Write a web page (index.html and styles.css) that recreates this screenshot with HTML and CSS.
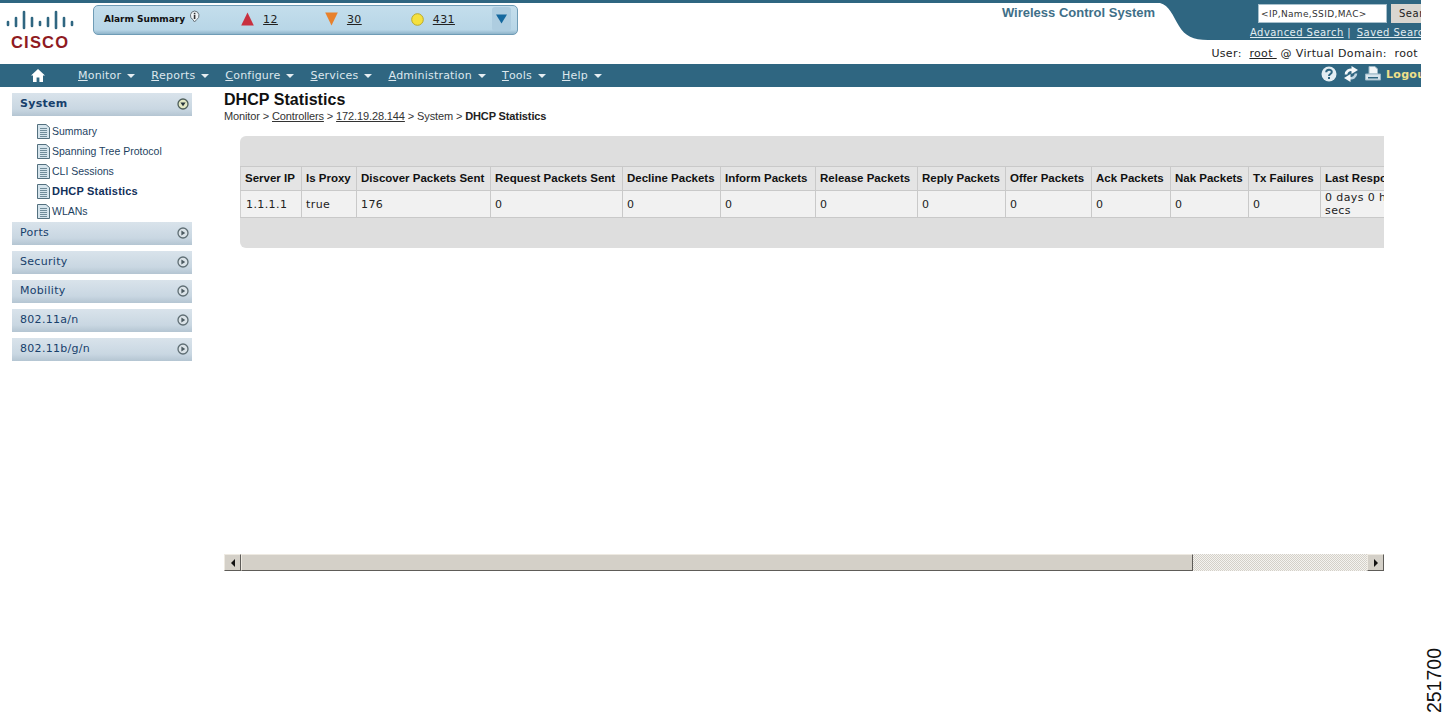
FILE: index.html
```html
<!DOCTYPE html>
<html lang="en">
<head>
  <meta charset="UTF-8" />
  <title>DHCP Statistics</title>
  <link rel="stylesheet" href="styles.css">
</head>
<body>

  <div class="frame">
    <div class="topline"></div>

    <div class="header">
      <div class="logo">
        <svg class="logo-bars" width="69" height="20" viewBox="0 0 69 20">
          <g stroke="#2f6681" stroke-width="2.6" stroke-linecap="round">
            <line x1="3" y1="12" x2="3" y2="15"/>
            <line x1="11" y1="8" x2="11" y2="16"/>
            <line x1="19" y1="2" x2="19" y2="18"/>
            <line x1="27" y1="8" x2="27" y2="16"/>
            <line x1="35" y1="12" x2="35" y2="15"/>
            <line x1="43" y1="8" x2="43" y2="16"/>
            <line x1="51" y1="2" x2="51" y2="18"/>
            <line x1="59" y1="8" x2="59" y2="16"/>
            <line x1="67" y1="12" x2="67" y2="15"/>
          </g>
        </svg>
        <div class="logo-text">CISCO</div>
      </div>

      <div class="alarm">
        <span class="alarm-title">Alarm Summary</span>
        <svg class="alarm-info" width="13" height="13" viewBox="0 0 13 13">
          <path d="M6.5 1a4.6 4.6 0 0 1 2 8.7L6.5 12 5 9.7A4.6 4.6 0 0 1 6.5 1z" fill="#eef3f6" stroke="#68747c"/>
          <rect x="5.8" y="5" width="1.6" height="4" fill="#333"/>
          <rect x="5.8" y="2.8" width="1.6" height="1.5" fill="#333"/>
        </svg>
        <span class="alarm-item alarm-crit">
          <svg width="13" height="14" viewBox="0 0 13 14"><path d="M6.5 0.5 12.8 13.5H0.2z" fill="#c8303f"/></svg>
          <a href="#">12</a>
        </span>
        <span class="alarm-item alarm-major">
          <svg width="13" height="14" viewBox="0 0 13 14"><path d="M0.2 0.5H12.8L6.5 13.5z" fill="#e8812c"/></svg>
          <a href="#">30</a>
        </span>
        <span class="alarm-item alarm-minor">
          <svg width="13" height="13" viewBox="0 0 13 13"><circle cx="6.5" cy="6.5" r="5.8" fill="#f5e13e" stroke="#b9a92b"/></svg>
          <a href="#">431</a>
        </span>
        <span class="alarm-toggle">
          <svg width="11" height="10" viewBox="0 0 11 10"><path d="M0 0.5H11L5.5 9.5z" fill="#14689e"/></svg>
        </span>
      </div>

      <div class="head-right">
        <div class="brand-row">
          <div class="brand">Wireless Control System</div>
          <svg class="brand-curve" width="48" height="37" viewBox="0 0 48 37">
            <path d="M0 0C9 2 13 13 19 23 25 33 33 37 48 37V0z" fill="#2f6681"/>
          </svg>
          <div class="search-panel">
            <div class="search-row">
              <input class="search-input" type="text" value="&lt;IP,Name,SSID,MAC&gt;">
              <button class="search-btn">Search</button>
            </div>
            <div class="search-links"><a href="#">Advanced Search</a> | <a href="#">Saved Searches</a></div>
          </div>
        </div>
        <div class="user-line">User:&nbsp; <a href="#">root&nbsp;</a> @ Virtual Domain:&nbsp; root</div>
      </div>
    </div>

    <div class="nav">
      <svg class="nav-home" width="14" height="13" viewBox="0 0 14 13">
        <path d="M7 0 14 6.5H12V13H8.4V8.6H5.6V13H2V6.5H0z" fill="#fff"/>
      </svg>
      <a class="nav-item" href="#"><u>M</u>onitor</a>
      <a class="nav-item" href="#"><u>R</u>eports</a>
      <a class="nav-item" href="#"><u>C</u>onfigure</a>
      <a class="nav-item" href="#"><u>S</u>ervices</a>
      <a class="nav-item" href="#"><u>A</u>dministration</a>
      <a class="nav-item" href="#"><u>T</u>ools</a>
      <a class="nav-item" href="#"><u>H</u>elp</a>
      <div class="nav-tools">
        <svg width="16" height="16" viewBox="0 0 16 16">
          <circle cx="8" cy="8" r="7.5" fill="#e3edf2"/>
          <path d="M5.2 6.2C5.2 2.9 10.8 2.9 10.8 6 10.8 8 8 8 8 10" fill="none" stroke="#2f6681" stroke-width="2"/>
          <rect x="7" y="11" width="2" height="2" fill="#2f6681"/>
        </svg>
        <svg width="16" height="16" viewBox="0 0 16 16">
          <path d="M3 8.5A5 5 0 0 1 9.5 4" fill="none" stroke="#f4f8fa" stroke-width="2.6"/>
          <path d="M8.5 0 15 4 8.5 8z" fill="#f4f8fa"/>
          <path d="M13 7.5A5 5 0 0 1 6.5 12" fill="none" stroke="#bfd6e3" stroke-width="2.6"/>
          <path d="M7.5 16 1 12 7.5 8z" fill="#f4f8fa"/>
        </svg>
        <svg width="16" height="16" viewBox="0 0 16 16">
          <path d="M4 0.5H10L12.5 3V8H4z" fill="#f2f6f8" stroke="#9db8c7"/>
          <path d="M0.5 8H15.5V14H0.5z" fill="#d7e4ec" stroke="#9db8c7"/>
          <rect x="3" y="11" width="10" height="1.5" fill="#2f6681"/>
        </svg>
        <a class="logout" href="#">Logout</a>
      </div>
    </div>

    <div class="page">
      <div class="sidebar">
        <div class="side-head side-open">System
          <svg width="12" height="12" viewBox="0 0 12 12"><circle cx="6" cy="6" r="5" fill="#e3e8c4" stroke="#4f5f5a" stroke-width="1.3"/><path d="M3.4 4.6H8.6L6 8.2z" fill="#26343a"/></svg>
        </div>
        <ul class="side-list">
          <li><svg class="doc" width="13" height="15" viewBox="0 0 13 15"><path d="M0.5 0.5H9L12.5 3.5V14.5H0.5z" fill="#d5e4ec" stroke="#53707f"/><path d="M3 4.5H10M3 6.5H10M3 8.5H10M3 10.5H10M3 12.5H10" stroke="#6f8c9a"/></svg>Summary</li>
          <li><svg class="doc" width="13" height="15" viewBox="0 0 13 15"><path d="M0.5 0.5H9L12.5 3.5V14.5H0.5z" fill="#d5e4ec" stroke="#53707f"/><path d="M3 4.5H10M3 6.5H10M3 8.5H10M3 10.5H10M3 12.5H10" stroke="#6f8c9a"/></svg>Spanning Tree Protocol</li>
          <li><svg class="doc" width="13" height="15" viewBox="0 0 13 15"><path d="M0.5 0.5H9L12.5 3.5V14.5H0.5z" fill="#d5e4ec" stroke="#53707f"/><path d="M3 4.5H10M3 6.5H10M3 8.5H10M3 10.5H10M3 12.5H10" stroke="#6f8c9a"/></svg>CLI Sessions</li>
          <li class="current"><svg class="doc" width="13" height="15" viewBox="0 0 13 15"><path d="M0.5 0.5H9L12.5 3.5V14.5H0.5z" fill="#d5e4ec" stroke="#53707f"/><path d="M3 4.5H10M3 6.5H10M3 8.5H10M3 10.5H10M3 12.5H10" stroke="#6f8c9a"/></svg>DHCP Statistics</li>
          <li><svg class="doc" width="13" height="15" viewBox="0 0 13 15"><path d="M0.5 0.5H9L12.5 3.5V14.5H0.5z" fill="#d5e4ec" stroke="#53707f"/><path d="M3 4.5H10M3 6.5H10M3 8.5H10M3 10.5H10M3 12.5H10" stroke="#6f8c9a"/></svg>WLANs</li>
        </ul>
        <div class="side-head">Ports
          <svg width="12" height="12" viewBox="0 0 12 12"><circle cx="6" cy="6" r="5" fill="#dbe3e8" stroke="#5f6e74" stroke-width="1.3"/><path d="M4.4 3.4V8.6L8.2 6z" fill="#4c5a60"/></svg>
        </div>
        <div class="side-head">Security
          <svg width="12" height="12" viewBox="0 0 12 12"><circle cx="6" cy="6" r="5" fill="#dbe3e8" stroke="#5f6e74" stroke-width="1.3"/><path d="M4.4 3.4V8.6L8.2 6z" fill="#4c5a60"/></svg>
        </div>
        <div class="side-head">Mobility
          <svg width="12" height="12" viewBox="0 0 12 12"><circle cx="6" cy="6" r="5" fill="#dbe3e8" stroke="#5f6e74" stroke-width="1.3"/><path d="M4.4 3.4V8.6L8.2 6z" fill="#4c5a60"/></svg>
        </div>
        <div class="side-head">802.11a/n
          <svg width="12" height="12" viewBox="0 0 12 12"><circle cx="6" cy="6" r="5" fill="#dbe3e8" stroke="#5f6e74" stroke-width="1.3"/><path d="M4.4 3.4V8.6L8.2 6z" fill="#4c5a60"/></svg>
        </div>
        <div class="side-head">802.11b/g/n
          <svg width="12" height="12" viewBox="0 0 12 12"><circle cx="6" cy="6" r="5" fill="#dbe3e8" stroke="#5f6e74" stroke-width="1.3"/><path d="M4.4 3.4V8.6L8.2 6z" fill="#4c5a60"/></svg>
        </div>
      </div>

      <div class="content">
        <h1 class="title">DHCP Statistics</h1>
        <div class="crumbs">Monitor &gt; <a href="#">Controllers</a> &gt; <a href="#">172.19.28.144</a> &gt; System &gt; <b>DHCP Statistics</b></div>

        <div class="table-panel">
          <table class="stats">
            <tr>
              <th>Server IP</th><th>Is Proxy</th><th>Discover Packets Sent</th><th>Request Packets Sent</th>
              <th>Decline Packets</th><th>Inform Packets</th><th>Release Packets</th><th>Reply Packets</th>
              <th>Offer Packets</th><th>Ack Packets</th><th>Nak Packets</th><th>Tx Failures</th><th>Last Response</th>
            </tr>
            <tr>
              <td>1.1.1.1</td><td>true</td><td>176</td><td>0</td><td>0</td><td>0</td><td>0</td><td>0</td><td>0</td><td>0</td><td>0</td><td>0</td>
              <td>0 days 0 hours 0 mins 12 secs</td>
            </tr>
          </table>
        </div>

        <div class="hscroll">
          <div class="hscroll-btn"><span class="arrow-left"></span></div>
          <div class="hscroll-thumb"></div>
          <div class="hscroll-track"></div>
          <div class="hscroll-btn"><span class="arrow-right"></span></div>
        </div>
      </div>
    </div>
  </div>

  <div class="figure-no">251700</div>

</body>
</html>
```

FILE: styles.css
```css
html, body {
  height: 100%;
}

body {
  margin: 0;
  background: #fff;
  color: #222;
  font-family: "DejaVu Sans", sans-serif;
  font-size: 11px;
  overflow: hidden;
}

a {
  color: inherit;
}

.frame {
  width: 1421px;
  height: 715px;
  overflow: hidden;
}

.topline {
  height: 3px;
  background: #2f6681;
}

/* header */
.header {
  display: flex;
  height: 61px;
}

.logo {
  width: 69px;
  padding: 7px 19px 0 5px;
}

.logo-bars {
  display: block;
}

.logo-text {
  margin-top: 4px;
  padding-left: 6px;
  color: #8f1a22;
  font-family: "Liberation Sans", sans-serif;
  font-size: 16.5px;
  font-weight: bold;
  line-height: 16px;
  letter-spacing: 1.2px;
}

.alarm {
  display: flex;
  align-items: center;
  box-sizing: border-box;
  width: 425px;
  height: 30px;
  margin-top: 2px;
  padding: 0 4px 2px 10px;
  background: linear-gradient(#c4deec, #b8d6e7 85%, #8fb4ca);
  border: 1px solid #6f9cb6;
  border-radius: 5px;
}

.alarm-title {
  color: #111;
  font-size: 9px;
  font-weight: bold;
}

.alarm-info {
  margin: -5px 0 0 3px;
}

.alarm-item {
  display: flex;
  align-items: center;
  gap: 9px;
  letter-spacing: .4px;
}

.alarm-crit {
  margin-left: 40px;
}

.alarm-major {
  margin-left: 47px;
}

.alarm-minor {
  margin-left: 49px;
}

.alarm-toggle {
  display: flex;
  align-items: center;
  justify-content: center;
  width: 19px;
  height: 24px;
  margin-left: auto;
  margin-right: 2px;
  background: #aecde0;
  border-radius: 3px;
}

.head-right {
  flex: 1;
  display: flex;
  flex-direction: column;
}

.brand-row {
  display: flex;
  justify-content: flex-end;
  height: 37px;
}

.brand {
  margin: 2px 5px 0 0;
  color: #3f6f88;
  font-family: "Liberation Sans", sans-serif;
  font-size: 13px;
  font-weight: bold;
  line-height: 16px;
}

.brand-curve {
  display: block;
}

.search-panel {
  box-sizing: border-box;
  width: 213px;
  padding: 1px 0 0 42px;
  background: #2f6681;
  color: #e3edf2;
  white-space: nowrap;
  overflow: hidden;
}

.search-row {
  display: flex;
  gap: 4px;
  margin-left: 8px;
}

.search-input {
  box-sizing: border-box;
  flex: none;
  width: 129px;
  height: 19px;
  padding: 0 2px;
  border: 1px solid #a8c0cc;
  background: #fff;
  color: #333;
  font-family: "DejaVu Sans", sans-serif;
  font-size: 9px;
  letter-spacing: .35px;
}

.search-btn {
  flex: none;
  width: 50px;
  height: 19px;
  padding: 0 8px;
  border: none;
  background: #d9d6d0;
  color: #222;
  font-family: "DejaVu Sans", sans-serif;
  font-size: 10px;
  letter-spacing: .5px;
  text-align: left;
}

.search-links {
  margin-top: 3px;
  font-size: 10px;
  line-height: 13px;
  letter-spacing: .45px;
}

.search-links a + a {
  margin-left: 2px;
}

.user-line {
  margin-top: 7px;
  padding-right: 3px;
  text-align: right;
  line-height: 14px;
  letter-spacing: .35px;
}

/* nav bar */
.nav {
  display: flex;
  align-items: center;
  height: 23px;
  padding-left: 31px;
  background: #2f6681;
}

.nav-home {
  margin-right: 33px;
}

.nav-item {
  display: flex;
  align-items: center;
  margin-right: 16px;
  color: #dde8ee;
  text-decoration: none;
  white-space: nowrap;
  letter-spacing: .2px;
}

.nav-item::after {
  content: "";
  margin-left: 6px;
  border-top: 4px solid #e6eef2;
  border-left: 4px solid transparent;
  border-right: 4px solid transparent;
}

.nav-tools {
  display: flex;
  align-items: center;
  gap: 6px;
  box-sizing: border-box;
  width: 100px;
  margin-left: auto;
  overflow: hidden;
  margin-top: -3px;
}

.nav-tools svg {
  flex: none;
}

.logout {
  flex: none;
  margin-left: -1px;
  color: #efe08a;
  font-weight: bold;
  text-decoration: none;
  letter-spacing: .3px;
}

/* page body */
.page {
  display: flex;
}

.sidebar {
  flex: none;
  width: 180px;
  margin: 6px 32px 0 12px;
}

.side-head {
  display: flex;
  align-items: center;
  justify-content: space-between;
  box-sizing: border-box;
  height: 23px;
  margin-bottom: 6px;
  padding: 0 3px 3px 8px;
  background: linear-gradient(#d9e3eb, #c9d7e2 70%, #b4c5d2);
  color: #17406b;
  letter-spacing: .3px;
}

.side-head svg {
  margin-top: 1px;
}

.side-open {
  margin-bottom: 0;
  font-weight: bold;
}

.side-list {
  margin: 5px 0 1px;
  padding: 0 0 0 25px;
  list-style: none;
}

.side-list li {
  display: flex;
  align-items: center;
  gap: 2px;
  height: 20px;
  color: #1d3f5f;
  font-family: "Liberation Sans", sans-serif;
  font-size: 10.5px;
}

.side-list .current {
  color: #12305a;
  font-size: 11px;
  font-weight: bold;
  letter-spacing: .2px;
}

.doc {
  flex: none;
}

.content {
  flex: none;
  width: 1160px;
}

.title {
  margin: 4px 0 0;
  color: #111;
  font-family: "Liberation Sans", sans-serif;
  font-size: 16px;
  font-weight: bold;
  line-height: 17px;
  letter-spacing: .05px;
}

.crumbs {
  margin-top: 1px;
  color: #333;
  font-family: "Liberation Sans", sans-serif;
  font-size: 11px;
  line-height: 14px;
  letter-spacing: -.12px;
}

.crumbs b {
  color: #222;
}

.table-panel {
  box-sizing: border-box;
  width: 1144px;
  height: 112px;
  margin: 13px 0 0 16px;
  padding-top: 30px;
  background: #dedede;
  border-radius: 6px 0 0 6px;
  overflow: hidden;
}

.stats {
  table-layout: fixed;
  width: 1260px;
  border-collapse: collapse;
}

.stats th,
.stats td {
  box-sizing: border-box;
  padding: 0 4px;
  border: 1px solid #c9c9c9;
  border-left-color: #cfcfcf;
  text-align: left;
  vertical-align: middle;
}

.stats th {
  height: 24px;
  padding-bottom: 2px;
  background: #e4e4e4;
  color: #111;
  font-family: "Liberation Sans", sans-serif;
  font-size: 11.5px;
  font-weight: bold;
  white-space: nowrap;
}

.stats td {
  height: 27px;
  background: #f1f1f1;
  color: #222;
  line-height: 13px;
  letter-spacing: .4px;
}

.stats td:first-child {
  padding-left: 5px;
}

.stats td:last-child {
  padding-top: 1px;
  line-height: 12.5px;
}

.stats th:nth-child(1) { width: 61px; }
.stats th:nth-child(2) { width: 55px; }
.stats th:nth-child(3) { width: 134px; }
.stats th:nth-child(4) { width: 132px; }
.stats th:nth-child(5) { width: 98px; }
.stats th:nth-child(6) { width: 95px; }
.stats th:nth-child(7) { width: 102px; }
.stats th:nth-child(8) { width: 88px; }
.stats th:nth-child(9) { width: 86px; }
.stats th:nth-child(10) { width: 79px; }
.stats th:nth-child(11) { width: 78px; }
.stats th:nth-child(12) { width: 72px; }
.stats th:nth-child(13) { width: 180px; }

/* horizontal scrollbar, old Windows look */
.hscroll {
  display: flex;
  height: 17px;
  margin-top: 306px;
}

.hscroll-btn {
  flex: none;
  display: flex;
  align-items: center;
  justify-content: center;
  box-sizing: border-box;
  width: 17px;
  background: #d4d0c8;
  border: 1px solid;
  border-color: #eeeae2 #5e5c58 #5e5c58 #eeeae2;
}

.hscroll-thumb {
  flex: none;
  box-sizing: border-box;
  width: 952px;
  background: #d4d0c8;
  border: 1px solid;
  border-color: #eeeae2 #5e5c58 #5e5c58 #eeeae2;
}

.hscroll-track {
  flex: 1;
  background: repeating-conic-gradient(#d4d0c8 0 25%, #f4f3f0 0 50%) 0 0 / 2px 2px;
}

.arrow-left {
  border-right: 4px solid #111;
  border-top: 4px solid transparent;
  border-bottom: 4px solid transparent;
}

.arrow-right {
  border-left: 4px solid #111;
  border-top: 4px solid transparent;
  border-bottom: 4px solid transparent;
}

.figure-no {
  position: absolute;
  left: 1423px;
  bottom: 2px;
  color: #111;
  font-family: "Liberation Sans", sans-serif;
  font-size: 19.5px;
  line-height: 22px;
  writing-mode: vertical-rl;
  transform: rotate(180deg);
}
```
